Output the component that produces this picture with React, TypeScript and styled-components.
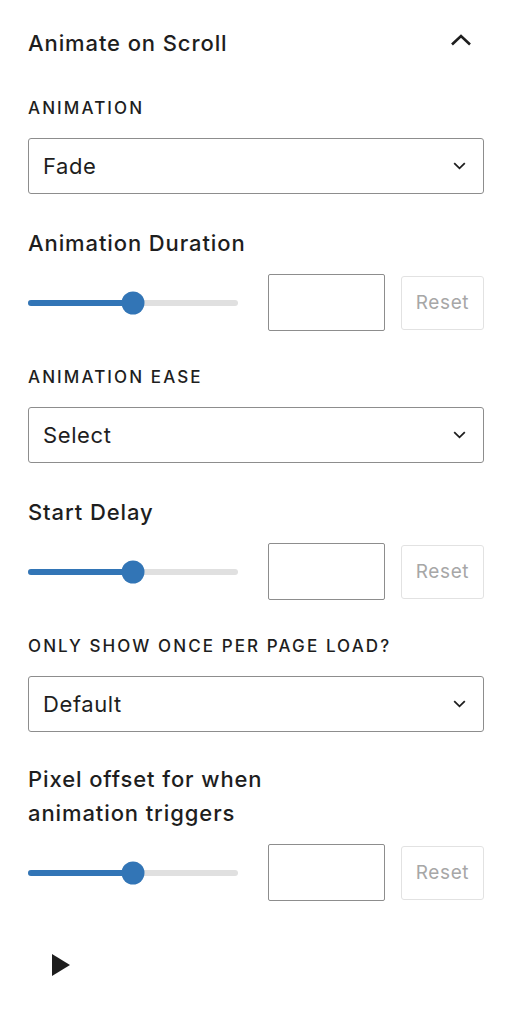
import React from "react";
import styled, { createGlobalStyle } from "styled-components";

const GlobalStyle = createGlobalStyle`
  html, body {
    margin: 0;
    padding: 0;
    background: #fff;
  }
  body {
    font-family: Inter, "Liberation Sans", sans-serif;
    color: #1e1e1e;
  }
`;

interface ISelectFieldProps {
  label: string;
  value: string;
}

interface ISliderFieldProps {
  title: React.ReactNode;
  percent: number;
  top?: number;
}

const ChevronDown = () => (
  <svg width="13" height="8" viewBox="0 0 13 8">
    <polyline
      points="1.2,1.2 6.5,6.3 11.8,1.2"
      fill="none"
      stroke="#1e1e1e"
      strokeWidth="1.8"
    />
  </svg>
);

const SelectField = ({ label, value }: ISelectFieldProps) => (
  <SelectGroup>
    <CapsLabel>{label}</CapsLabel>
    <SelectBox>
      <SelectValue>{value}</SelectValue>
      <ChevronDown />
    </SelectBox>
  </SelectGroup>
);

const SliderField = ({ title, percent, top = 32 }: ISliderFieldProps) => (
  <SliderGroup $top={top}>
    <Heading>{title}</Heading>
    <SliderRow>
      <Track>
        <Fill style={{ width: `${percent}%` }} />
        <Thumb style={{ left: `${percent}%` }} />
      </Track>
      <NumberBox />
      <ResetButton>Reset</ResetButton>
    </SliderRow>
  </SliderGroup>
);

export default function App() {
  return (
    <>
      <GlobalStyle />
      <Panel>
        <Header>
          <Title>Animate on Scroll</Title>
          <svg width="22" height="14" viewBox="0 0 22 14">
            <polyline
              points="2,11.5 11,3 20,11.5"
              fill="none"
              stroke="#1e1e1e"
              strokeWidth="2.6"
            />
          </svg>
        </Header>

        <SelectField label="Animation" value="Fade" />
        <SliderField title="Animation Duration" percent={50} />

        <SelectField label="Animation Ease" value="Select" />
        <SliderField title="Start Delay" percent={50} />

        <SelectField label="Only show once per page load?" value="Default" />
        <SliderField
          title={
            <>
              Pixel offset for when
              <br />
              animation triggers
            </>
          }
          percent={50}
          top={30}
        />

        <PlayRow>
          <svg width="18" height="22" viewBox="0 0 18 22">
            <polygon points="0,0 18,11 0,22" fill="#1e1e1e" />
          </svg>
        </PlayRow>
      </Panel>
    </>
  );
}

const Panel = styled.div`
  width: 512px;
  box-sizing: border-box;
  padding: 0 28px;
  display: flex;
  flex-direction: column;
`;

const Header = styled.div`
  height: 62px;
  box-sizing: border-box;
  padding-top: 23px;
  display: flex;
  align-items: center;
  justify-content: space-between;
  svg {
    margin-right: 12px;
    margin-top: -6px;
  }
`;

const Title = styled.div`
  font-size: 22px;
  font-weight: 500;
  line-height: 34px;
  letter-spacing: 0.9px;
`;

const SelectGroup = styled.div`
  margin-top: 36px;
  display: flex;
  flex-direction: column;
  gap: 20px;
`;

const CapsLabel = styled.div`
  font-size: 17px;
  line-height: 20px;
  font-weight: 500;
  text-transform: uppercase;
  letter-spacing: 2.1px;
`;

const SelectBox = styled.div`
  height: 56px;
  box-sizing: border-box;
  border: 1px solid #8d8d8d;
  border-radius: 3px;
  display: flex;
  align-items: center;
  justify-content: space-between;
  padding: 0 17px 0 14px;
`;

const SelectValue = styled.span`
  font-size: 22px;
  letter-spacing: 0.6px;
`;

const SliderGroup = styled.div<{ $top: number }>`
  margin-top: ${(p) => p.$top}px;
  display: flex;
  flex-direction: column;
  gap: 14px;
`;

const Heading = styled.div`
  font-size: 22px;
  font-weight: 500;
  line-height: 34px;
  letter-spacing: 0.9px;
`;

const SliderRow = styled.div`
  display: flex;
  align-items: center;
  height: 57px;
`;

const Track = styled.div`
  position: relative;
  width: 210px;
  height: 6px;
  border-radius: 3px;
  background: #e0e0e0;
  margin-right: 30px;
`;

const Fill = styled.div`
  height: 100%;
  border-radius: 3px;
  background: #3275b6;
`;

const Thumb = styled.div`
  position: absolute;
  top: 50%;
  width: 23px;
  height: 23px;
  border-radius: 50%;
  background: #3275b6;
  transform: translate(-50%, -50%);
`;

const NumberBox = styled.div`
  width: 117px;
  height: 57px;
  box-sizing: border-box;
  border: 1px solid #8d8d8d;
  border-radius: 2px;
  margin-right: 16px;
`;

const ResetButton = styled.div`
  width: 83px;
  height: 54px;
  box-sizing: border-box;
  border: 1px solid #e2e2e2;
  border-radius: 3px;
  display: flex;
  align-items: center;
  justify-content: center;
  font-size: 19px;
  letter-spacing: 0.6px;
  color: #a7a7a7;
`;

const PlayRow = styled.div`
  margin-top: 53px;
  padding-left: 24px;
  display: flex;
`;
